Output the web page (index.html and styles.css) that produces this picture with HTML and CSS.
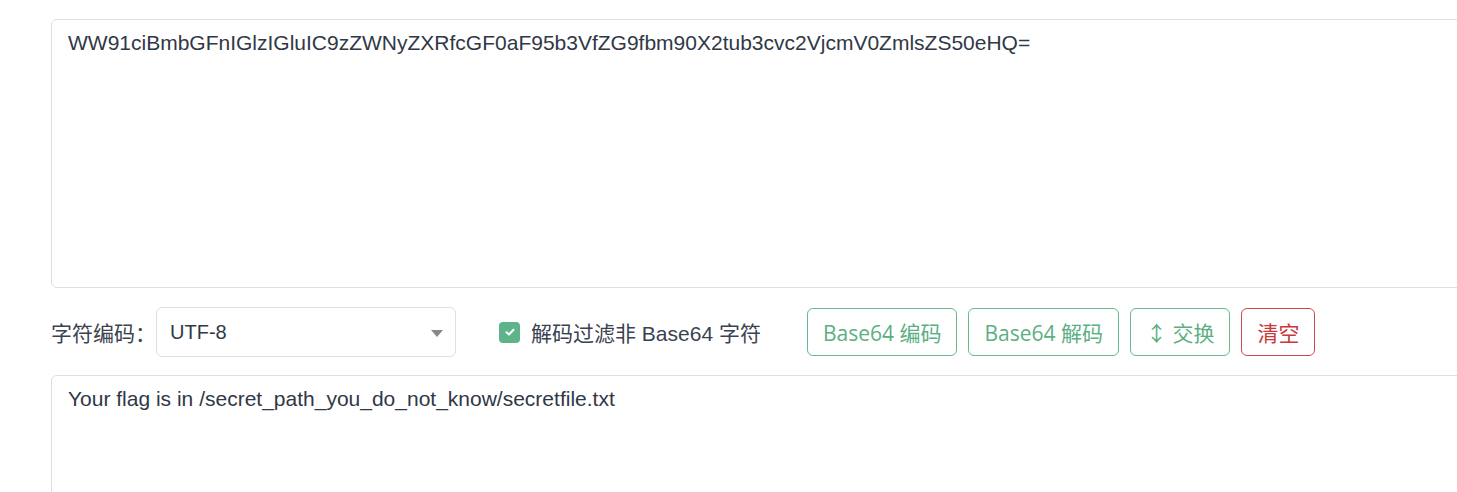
FILE: index.html
```html
<!DOCTYPE html>
<html lang="zh">
<head>
<meta charset="utf-8">
<link rel="stylesheet" href="styles.css">
</head>
<body>
<div class="page">
  <div class="box box-top"><div class="box-text">WW91ciBmbGFnIGlzIGluIC9zZWNyZXRfcGF0aF95b3VfZG9fbm90X2tub3cvc2VjcmV0ZmlsZS50eHQ=</div></div>
  <div class="toolbar">
    <span class="label">字符编码：</span>
    <div class="select">
      <span>UTF-8</span>
      <span class="caret"></span>
    </div>
    <label class="check">
      <span class="checkbox"><svg viewBox="0 0 12 12" width="12" height="12"><path d="M2.5 6.2 L5 8.5 L9.5 3.8" fill="none" stroke="#fff" stroke-width="2" stroke-linecap="round" stroke-linejoin="round"/></svg></span>
      <span class="check-text">解码过滤非 Base64 字符</span>
    </label>
    <div class="buttons">
      <button class="btn btn-green">Base64 编码</button>
      <button class="btn btn-green">Base64 解码</button>
      <button class="btn btn-green">↕ 交换</button>
      <button class="btn btn-red">清空</button>
    </div>
  </div>
  <div class="box box-bottom"><div class="box-text">Your flag is in /secret_path_you_do_not_know/secretfile.txt</div></div>
</div>
</body>
</html>
```

FILE: styles.css
```css
html, body {
  margin: 0;
  padding: 0;
  background: #fff;
  overflow: hidden;
}
.page {
  padding: 19px 0 0 51px;
  width: 1500px;
}
.box {
  box-sizing: border-box;
  width: 1460px;
  border: 1px solid #dcdfe6;
  border-radius: 6px;
  background: #fff;
  padding: 11px 16px;
}
.box-top {
  height: 269px;
}
.box-bottom {
  height: 140px;
}
.box-text {
  font-family: "Liberation Sans", Arial, sans-serif;
  font-size: 21px;
  line-height: 24px;
  color: #303846;
}
.toolbar {
  display: flex;
  align-items: center;
  height: 50px;
  margin: 19px 0 18px;
}
.label {
  font-family: "Liberation Sans", "Noto Sans CJK SC", sans-serif;
  font-size: 21px;
  color: #3a4250;
  width: 105px;
}
.select {
  box-sizing: border-box;
  width: 300px;
  height: 50px;
  border: 1px solid #dcdfe6;
  border-radius: 6px;
  display: flex;
  align-items: center;
  justify-content: space-between;
  padding: 1px 12px 0 13px;
  font-family: "Liberation Sans", Arial, sans-serif;
  font-size: 20px;
  color: #303846;
}
.caret {
  width: 0;
  height: 0;
  border-left: 6px solid transparent;
  border-right: 6px solid transparent;
  border-top: 7px solid #888;
  margin-top: 1px;
}
.check {
  display: flex;
  align-items: center;
  margin-left: 43px;
  gap: 11px;
}
.checkbox {
  width: 21px;
  height: 21px;
  border-radius: 4px;
  background: #5fb389;
  display: flex;
  align-items: center;
  justify-content: center;
}
.check-text {
  font-family: "Liberation Sans", "Noto Sans CJK SC", sans-serif;
  font-size: 21px;
  color: #3a4250;
}
.buttons {
  display: flex;
  gap: 11px;
  margin-left: 46px;
}
.btn {
  box-sizing: border-box;
  height: 48px;
  padding: 0 15px;
  background: #fff;
  border-radius: 6px;
  font-family: "Open Sans", "Noto Sans CJK SC", sans-serif;
  font-size: 21px;
  cursor: pointer;
}
.btn-green {
  border: 1px solid #67b98b;
  color: #5caf82;
}
.btn-red {
  border: 1px solid #cc4a4a;
  color: #c9393b;
}
```
